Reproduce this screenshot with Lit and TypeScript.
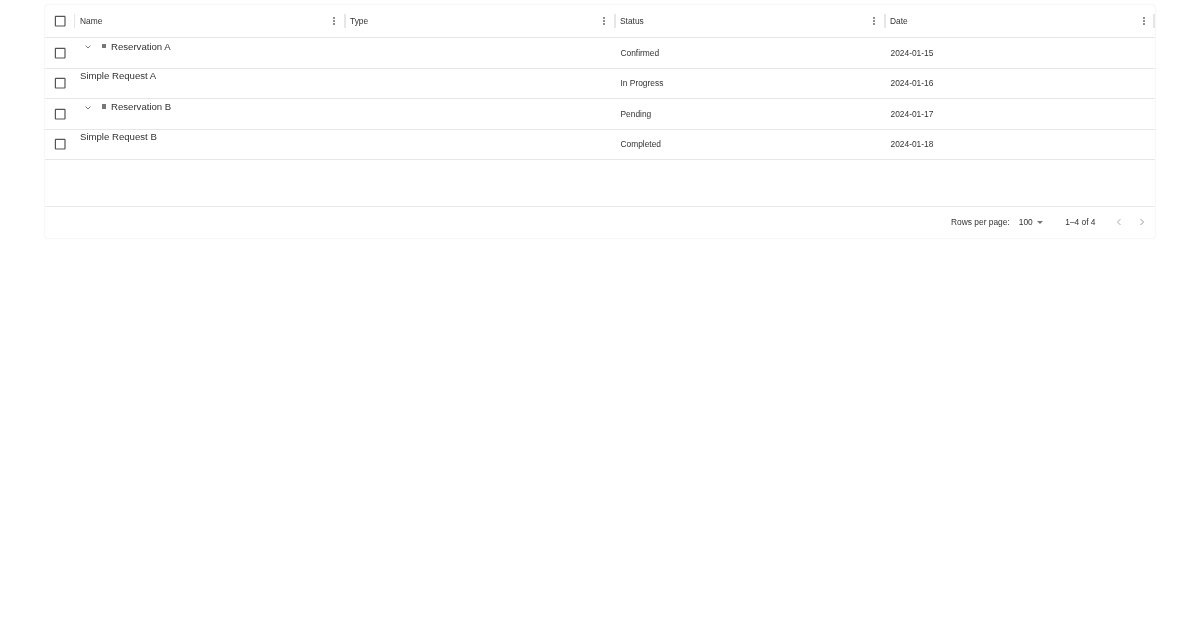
import { LitElement, html, css, svg } from "lit";
import { customElement } from "lit/decorators.js";

const rows = [
  { name: "Reservation A", tree: true, status: "Confirmed", date: "2024-01-15" },
  { name: "Simple Request A", tree: false, status: "In Progress", date: "2024-01-16" },
  { name: "Reservation B", tree: true, status: "Pending", date: "2024-01-17" },
  { name: "Simple Request B", tree: false, status: "Completed", date: "2024-01-18" },
];
const cols = ["Name", "Type", "Status", "Date"];

const checkbox = html`<svg class="cb" viewBox="0 0 24 24" width="14.4" height="14.4"><path fill="#555" d="M19 5v14H5V5h14m0-2H5c-1.100 0-2 .9-2 2v14c0 1.100.9 2 2 2h14c1.100 0 2-.9 2-2V5c0-1.100-.9-2-2-2z"/></svg>`;
const dots = html`<svg class="dots" viewBox="0 0 24 24" width="12" height="12"><path fill="#777" d="M12 8c1.100 0 2-.9 2-2s-.9-2-2-2-2 .9-2 2 .9 2 2 2zm0 2c-1.100 0-2 .9-2 2s.9 2 2 2 2-.9 2-2-.9-2-2-2zm0 6c-1.100 0-2 .9-2 2s.9 2 2 2 2-.9 2-2-.9-2-2-2z"/></svg>`;
const chev = (d: string, c = "#777") => svg`<path fill="none" stroke="${c}" stroke-width="1" d="${d}"/>`;

@customElement("app-root")
export class AppRoot extends LitElement {
  static styles = css`
    :host { display: block; height: 630px; background: #fff; font-family: "Liberation Sans", Arial, sans-serif; color: #333; }
    .page { padding: 5px 45px 0; }
    .card { height: 232.500px; border-radius: 3px; box-shadow: 0 0 2px rgba(0,0,0,.13); display: flex; flex-direction: column; filter: blur(.3px); }
    .grid { display: grid; grid-template-columns: 30px repeat(4, 1fr); }
    .head { height: 32.400px; border-bottom: 1px solid #e6e6e6; font-size: 8.400px; color: #333; }
    .row { height: 29.400px; border-bottom: 1px solid #e6e6e6; font-size: 8.400px; }
    .check { display: flex; align-items: center; justify-content: center; }
    .hc { display: flex; align-items: center; padding: 0 5.500px 0 5px; position: relative; }
    .hc .label { flex: 1; }
    .sep { position: absolute; left: -1px; top: 9px; height: 14px; width: 2px; background: #e6e6e6; }
    .hc.first .sep { width: 1px; left: -1px; }
    .sep2 { position: absolute; right: 0; top: 9px; height: 14px; width: 2px; background: #e6e6e6; }
    .cell { display: flex; align-items: center; padding: 0 5.500px; color: #333; }
    .namecell { align-items: flex-start; padding: 1.200px 5px 0; font-size: 9.600px; line-height: 11px; color: #333; }
    .tree { display: flex; align-items: flex-start; margin-top: 1px; }
    .tree svg.c { margin: 1.500px 0 0 3px; }
    .sq { width: 4.500px; height: 4.500px; background: #777; margin: 3px 5px 0 8.500px; }
    .spacer { flex: 1; }
    .foot { height: 30.500px; border-top: 1px solid #eaeaea; display: flex; align-items: center; justify-content: flex-end; font-size: 8.400px; color: #333; }
    .rpp { margin-right: 9px; }
    .sel { display: flex; align-items: center; gap: 3px; margin-right: 22.500px; }
    .tri { width: 0; height: 0; border-left: 3px solid transparent; border-right: 3px solid transparent; border-top: 3px solid #777; margin-left: 1px; }
    .range { margin-right: 17px; }
    .nav { display: flex; gap: 11px; margin-right: 7.500px; }
  `;

  render() {
    return html`<div class="page"><div class="card">
      <div class="grid head">
        <div class="check">${checkbox}</div>
        ${cols.map((c, i) => html`<div class="hc ${i === 0 ? "first" : ""}"><span class="sep"></span><span class="label">${c}</span>${dots}${i === 3 ? html`<span class="sep2"></span>` : ""}</div>`)}
      </div>
      ${rows.map((r) => html`<div class="grid row">
        <div class="check">${checkbox}</div>
        <div class="cell namecell">${r.tree
          ? html`<div class="tree"><svg class="c" width="10" height="10" viewBox="0 0 10 10">${chev("M2.500 3.500 5 6l2.500-2.500")}</svg><span class="sq"></span><span>${r.name}</span></div>`
          : r.name}</div>
        <div class="cell"></div>
        <div class="cell">${r.status}</div>
        <div class="cell">${r.date}</div>
      </div>`)}
      <div class="spacer"></div>
      <div class="foot">
        <span class="rpp">Rows per page:</span>
        <div class="sel"><span>100</span><span class="tri"></span></div>
        <span class="range">1–4 of 4</span>
        <div class="nav">
          <svg width="12" height="12" viewBox="0 0 12 12">${chev("M7.500 3 4.500 6l3 3", "#aaa")}</svg>
          <svg width="12" height="12" viewBox="0 0 12 12">${chev("M4.500 3l3 3-3 3", "#999")}</svg>
        </div>
      </div>
    </div></div>`;
  }
}
